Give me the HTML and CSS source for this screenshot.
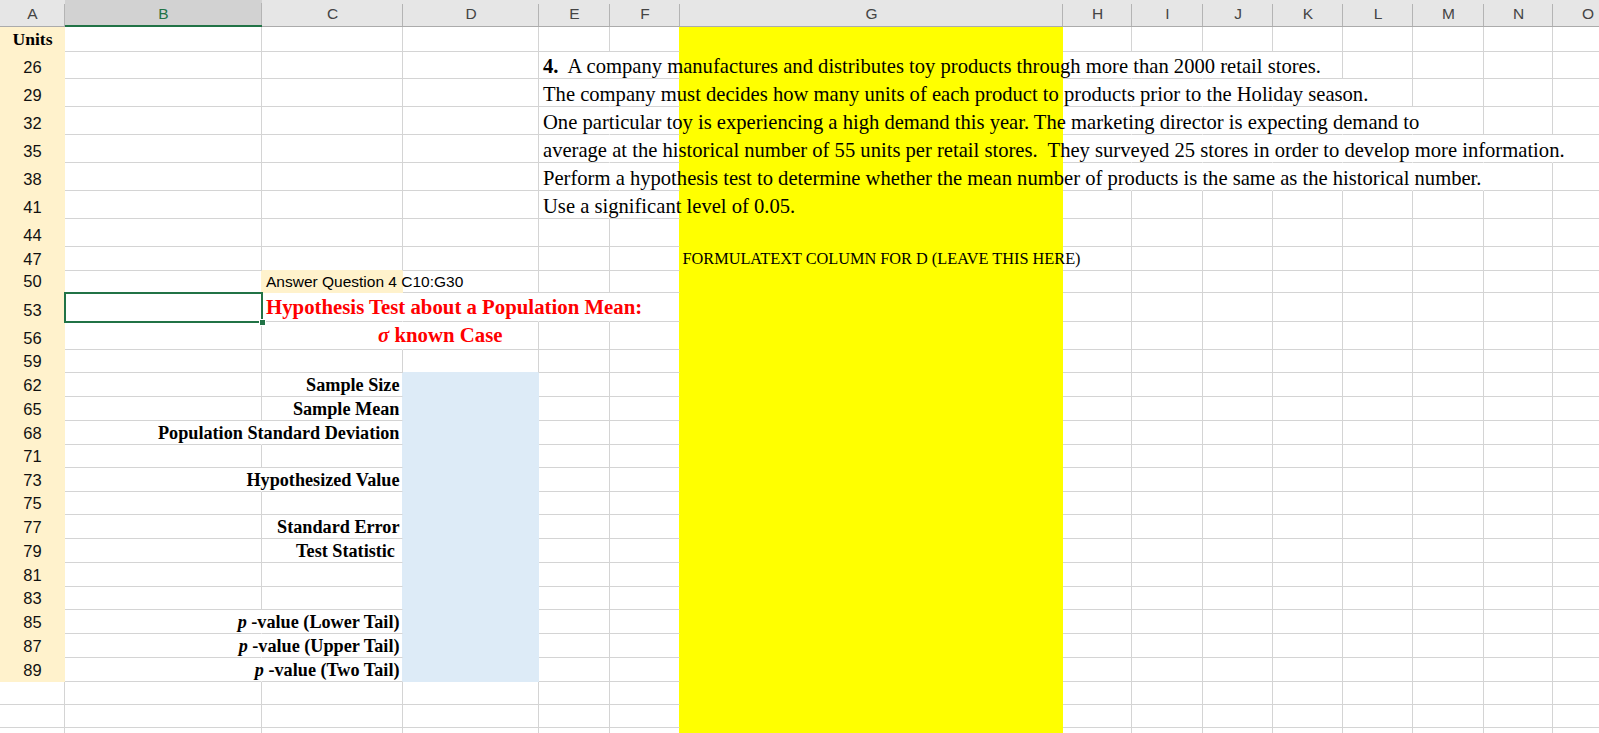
FILE: index.html
```html
<!DOCTYPE html>
<html lang="en">
<head>
    <meta charset="UTF-8">
    <meta name="viewport" content="width=device-width, initial-scale=1.0">
    <title>Hypothesis Test about a Population Mean</title>
    <link rel="stylesheet" href="styles.css">
</head>
<body>
    <div class="sheet" id="sheet"></div>

    <script>
        const letters = 'ABCDEFGHIJKLMNO'.split('');

        // column A values, one per sheet row ('' = empty rows under the data)
        const rows = ['Units', 26, 29, 32, 35, 38, 41, 44, 47, 50, 53, 56, 59, 62, 65, 68, 71,
                      73, 75, 77, 79, 81, 83, 85, 87, 89, '', '', ''];
        const rowOf = v => rows.indexOf(v);
        const colOf = l => letters.indexOf(l);

        // cell fills
        function fillOf(r, c) {
            if (r < 0 || r >= rows.length || c < 0 || c >= letters.length) return '';
            if (c === 6) return 'yellow';
            if (c === 0 && r <= rowOf(89)) return 'cream';
            if (c === 2 && rows[r] === 50) return 'cream';
            if (c === 3 && r >= rowOf(62) && r <= rowOf(89)) return 'blue';
            return '';
        }

        // texts that spill over the next cells: row, first column, last column
        const texts = [
            { row: 26, from: 'E', to: 'K', cls: 'para', html: '<b>4.</b>  A company manufactures and distributes toy products through more than 2000 retail stores.' },
            { row: 29, from: 'E', to: 'L', cls: 'para', html: 'The company must decides how many units of each product to products prior to the Holiday season.' },
            { row: 32, from: 'E', to: 'M', cls: 'para', html: 'One particular toy is experiencing a high demand this year. The marketing director is expecting demand to' },
            { row: 35, from: 'E', to: 'O', cls: 'para', html: 'average at the historical number of 55 units per retail stores.  They surveyed 25 stores in order to develop more information.' },
            { row: 38, from: 'E', to: 'N', cls: 'para', html: 'Perform a hypothesis test to determine whether the mean number of products is the same as the historical number.' },
            { row: 41, from: 'E', to: 'G', cls: 'para', html: 'Use a significant level of 0.05.' },
            { row: 47, from: 'G', to: 'H', cls: 'formula', html: 'FORMULATEXT COLUMN FOR D (LEAVE THIS HERE)' },
            { row: 50, from: 'C', to: 'D', cls: 'answer', html: 'Answer Question 4 C10:G30' },
            { row: 53, from: 'C', to: 'F', cls: 'title', html: 'Hypothesis Test about a Population Mean:' },
            { row: 56, from: 'C', to: 'D', cls: 'title case', html: '<i>σ</i> known Case' },
            { row: 62, from: 'C', to: 'C', cls: 'label', html: 'Sample Size' },
            { row: 65, from: 'C', to: 'C', cls: 'label', html: 'Sample Mean' },
            { row: 68, from: 'B', to: 'C', cls: 'label', html: 'Population Standard Deviation' },
            { row: 73, from: 'B', to: 'C', cls: 'label', html: 'Hypothesized Value' },
            { row: 77, from: 'C', to: 'C', cls: 'label', html: 'Standard Error' },
            { row: 79, from: 'C', to: 'C', cls: 'label', html: 'Test Statistic ' },
            { row: 85, from: 'B', to: 'C', cls: 'label', html: '<i>p</i> -value (Lower Tail)' },
            { row: 87, from: 'B', to: 'C', cls: 'label', html: '<i>p</i> -value (Upper Tail)' },
            { row: 89, from: 'B', to: 'C', cls: 'label', html: '<i>p</i> -value (Two Tail)' }
        ];

        // cells whose right gridline is covered by spilling text
        const open = new Set();
        texts.forEach(t => {
            for (let c = colOf(t.from); c < colOf(t.to); c++) open.add(rowOf(t.row) + ':' + c);
        });

        const sheet = document.getElementById('sheet');

        function place(el, row, colStart, colEnd) {
            el.style.gridRow = row;
            el.style.gridColumn = colStart + ' / ' + colEnd;
            sheet.appendChild(el);
        }

        // column headers
        letters.forEach((l, c) => {
            const hd = document.createElement('div');
            hd.className = 'hd' + (l === 'B' ? ' sel' : '');
            hd.textContent = l;
            place(hd, 1, c + 1, c + 2);
        });

        // grid cells
        rows.forEach((v, r) => {
            letters.forEach((l, c) => {
                const cell = document.createElement('div');
                const cls = ['cell'];
                const fill = fillOf(r, c);
                if (fill) {
                    cls.push(fill);
                } else {
                    const right = fillOf(r, c + 1);
                    if (right) cls.push('rn-' + right);
                    else if (open.has(r + ':' + c)) cls.push('open');
                    const below = fillOf(r + 1, c);
                    if (below) cls.push('bn-' + below);
                }
                cell.className = cls.join(' ');
                place(cell, r + 2, c + 1, c + 2);
            });
        });

        // column A values
        rows.forEach((v, r) => {
            if (v === '') return;
            const el = document.createElement('div');
            el.className = 'txt ' + (typeof v === 'number' ? 'num' : 'units');
            el.textContent = v;
            place(el, r + 2, 1, 2);
        });

        texts.forEach(t => {
            const el = document.createElement('div');
            el.className = 'txt ' + t.cls;
            el.innerHTML = t.html;
            place(el, rowOf(t.row) + 2, colOf(t.from) + 1, colOf(t.to) + 2);
        });

        // active cell B53
        const sel = document.createElement('div');
        sel.className = 'selection';
        place(sel, rowOf(53) + 2, 2, 3);
    </script>
</body>
</html>
```

FILE: styles.css
```css
* {
    box-sizing: border-box;
}

html, body {
    margin: 0;
    background: #fff;
    overflow: hidden;
}

.sheet {
    display: grid;
    grid-template-columns: 65px 197px 141px 136px 71px 70px 383px 69px 71px 70px 70px 70px 71px 69px 70px;
    grid-template-rows: 27px 25px 27px repeat(6, 28px) 24px 22px 29px 28px 23px
                        24px 24px 24px 23px 24px 23px 24px 24px 24px 23px 24px 24px 24px
                        23px 23px 23px;
    width: 1623px;
    height: 733px;
    overflow: hidden;
}

/* column letters */
.hd {
    display: flex;
    align-items: center;
    justify-content: center;
    padding-top: 2px;
    background: linear-gradient(#b4b4b4, #b4b4b4) right bottom / 1px 22px no-repeat #e6e6e6;
    border-bottom: 1px solid #ababab;
    font: 15.5px "Liberation Sans", Arial, sans-serif;
    color: #444;
}

.hd.sel {
    background-color: #d2d2d2;
    border-bottom: 2px solid #217346;
    color: #217346;
}

/* gridlines */
.cell {
    border-right: 1px solid #d4d4d4;
    border-bottom: 1px solid #d4d4d4;
}

.cream  { background: #fff2cc; border-color: #fff2cc; }
.blue   { background: #ddebf7; border-color: #ddebf7; }
.yellow { background: #ffff00; border-color: #ffff00; }

.rn-cream  { border-right-color: #fff2cc; }
.rn-blue   { border-right-color: #ddebf7; }
.rn-yellow { border-right-color: #ffff00; }
.bn-cream  { border-bottom-color: #fff2cc; }
.bn-blue   { border-bottom-color: #ddebf7; }
.bn-yellow { border-bottom-color: #ffff00; }

.open {
    border-right-color: transparent;
}

/* cell text */
.txt {
    align-self: end;
    white-space: pre;
    line-height: normal;
    color: #000;
    font-family: "Liberation Serif", "Times New Roman", serif;
}

.num {
    font: 16.5px "Liberation Sans", Arial, sans-serif;
    color: #111;
    text-align: center;
    padding-bottom: 2px;
}

.units {
    font-weight: bold;
    font-size: 17.6px;
    text-align: center;
    padding-bottom: 2px;
}

.para {
    font-size: 20.6px;
    padding: 0 0 1px 4px;
}

.formula {
    font-size: 16.3px;
    padding: 0 0 2.5px 2.5px;
}

.answer {
    font: 15.5px "Liberation Sans", Arial, sans-serif;
    padding: 0 0 2.4px 4px;
}

.title {
    color: #ff0000;
    font-weight: bold;
    font-size: 20.8px;
    padding: 0 0 3.5px 4px;
}

.title.case {
    padding: 0 0 3.3px 116px;
}

.label {
    font-weight: bold;
    font-size: 18.2px;
    text-align: right;
    padding: 0 3.5px 1px 0;
}

/* active cell */
.selection {
    margin: -1px -1px -1px -1px;
    border: 2px solid #217346;
    position: relative;
}

.selection::after {
    content: '';
    position: absolute;
    right: -4px;
    bottom: -4px;
    width: 5px;
    height: 5px;
    background: #217346;
    box-shadow: 0 0 0 1px #fff;
}
```
